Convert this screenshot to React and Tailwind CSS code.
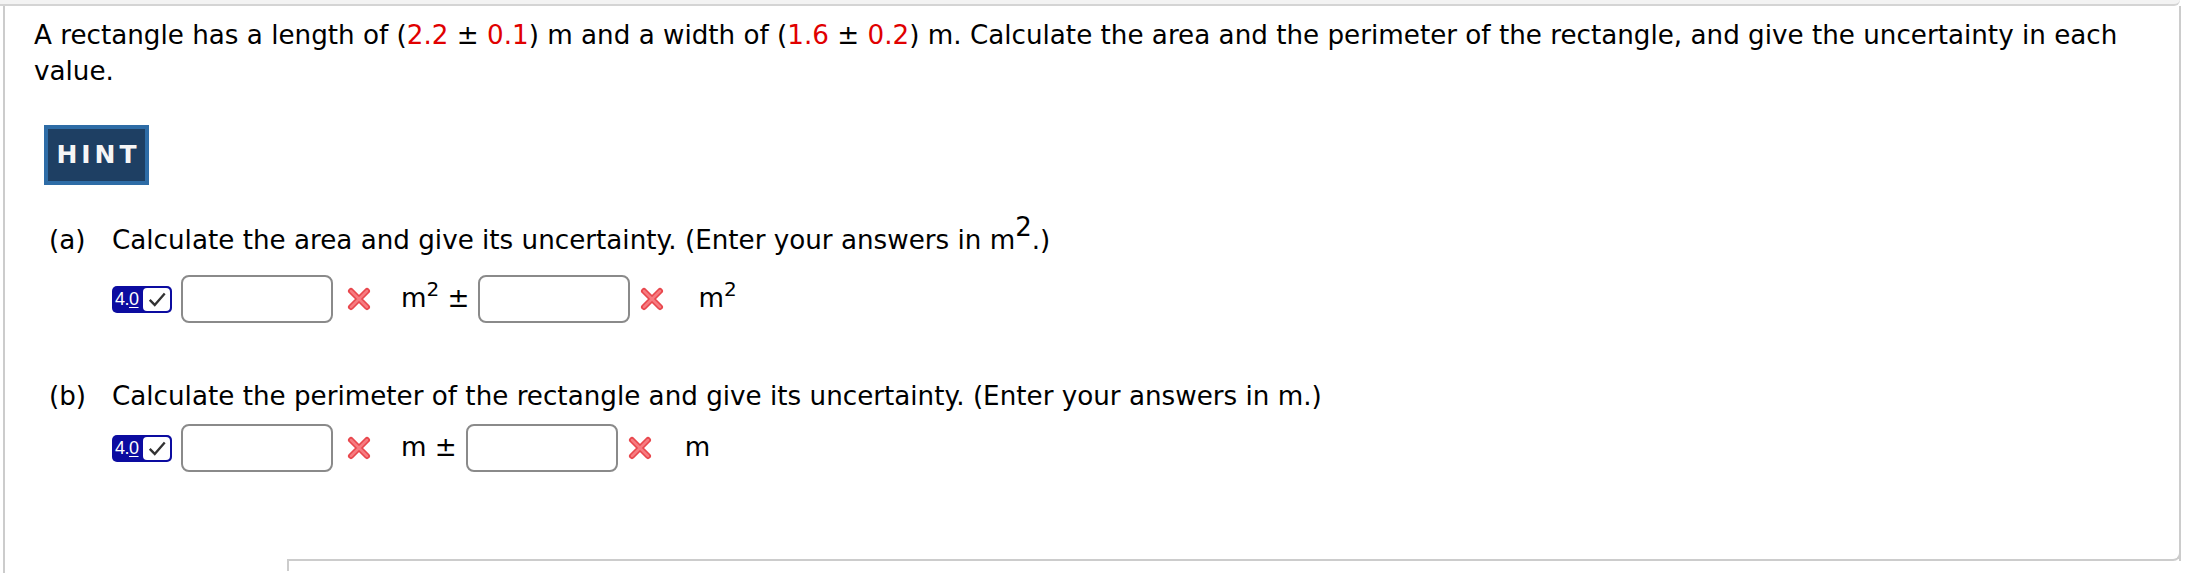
function XMark() {
  return (
    <svg width="26" height="26" viewBox="0 0 26 26" className="shrink-0">
      <path d="M5 5 L21 21 M21 5 L5 21" stroke="#e8474d" strokeWidth="6" strokeLinecap="round" />
      <path d="M5 5 L21 21 M21 5 L5 21" stroke="#f77b80" strokeWidth="2.5" strokeLinecap="round" />
    </svg>
  );
}

function Badge() {
  return (
    <div className="flex items-center h-[27px] w-[60px] rounded-[5px] bg-[#0c0ca0] pl-[3px] pr-[2px] shrink-0">
      <span className="text-white text-[18px] leading-none font-['Liberation_Sans_Narrow','Liberation_Sans',sans-serif] tracking-[-0.5px]">
        4.<span className="underline underline-offset-2">0</span>
      </span>
      <div className="ml-auto w-[27px] h-[23px] bg-white rounded-[4px] flex items-center justify-center">
        <svg width="20" height="17" viewBox="0 0 22 18">
          <path d="M3 9.5 L8.5 15 L19.5 2.5" fill="none" stroke="#333" strokeWidth="2.6" />
        </svg>
      </div>
    </div>
  );
}

function Box() {
  return <div className="w-[152px] h-[48px] shrink-0 rounded-[8px] border-2 border-[#8a8a8a] bg-white" />;
}

function Sq() {
  return (
    <span>
      m<sup className="text-[20px] top-[-0.55em]">2</sup>
    </span>
  );
}

export default function App() {
  return (
    <div className="h-[573px] w-full bg-white overflow-hidden text-[26.2px] text-black font-['DejaVu_Sans',sans-serif]">
      <div className="h-[6px] mr-[17px] bg-[#f3f3f3] border-b-2 border-[#d4d4d4] rounded-br-[6px]" />
      <div className="ml-[3px] border-l-2 border-[#cccccc] h-full">
        <div className="mr-[16px] border-r-2 border-[#cccccc] h-[555px] pl-[29px] pt-[11px]">
          <p className="leading-[36px] pr-[24px]">
            A rectangle has a length of (<span className="text-[#e00000]">2.2</span> ±{" "}
            <span className="text-[#e00000]">0.1</span>) m and a width of (<span className="text-[#e00000]">1.6</span> ±{" "}
            <span className="text-[#e00000]">0.2</span>) m. Calculate the area and the perimeter of the
            rectangle, and give the uncertainty in each value.
          </p>

          <div className="mt-[36px] ml-[10px] inline-flex items-center justify-center w-[105px] h-[60px] bg-[#1e3f63] border-4 border-[#2e6ca6] text-[#f6f6f6] font-bold text-[25px] tracking-[4px] pl-[4px]">
            HINT
          </div>

          <div className="mt-[37px] ml-[15px]">
            <div className="flex leading-[36px]">
              <span className="w-[63px] shrink-0">(a)</span>
              <span>
                Calculate the area and give its uncertainty. (Enter your answers in m
                <sup className="text-[26px] top-[-0.5em]">2</sup>.)
              </span>
            </div>
            <div className="flex items-center ml-[63px] mt-[17px]">
              <Badge />
              <div className="ml-[9px]">
                <Box />
              </div>
              <div className="ml-[13px]">
                <XMark />
              </div>
              <span className="ml-[29px]">
                <Sq /> ±
              </span>
              <div className="ml-[8px]">
                <Box />
              </div>
              <div className="ml-[9px]">
                <XMark />
              </div>
              <span className="ml-[34px]">
                <Sq />
              </span>
            </div>

            <div className="flex leading-[36px] mt-[55px]">
              <span className="w-[63px] shrink-0">(b)</span>
              <span>
                Calculate the perimeter of the rectangle and give its uncertainty. (Enter your answers in m.)
              </span>
            </div>
            <div className="flex items-center ml-[63px] mt-[10px]">
              <Badge />
              <div className="ml-[9px]">
                <Box />
              </div>
              <div className="ml-[13px]">
                <XMark />
              </div>
              <span className="ml-[29px]">m ±</span>
              <div className="ml-[9px]">
                <Box />
              </div>
              <div className="ml-[9px]">
                <XMark />
              </div>
              <span className="ml-[32px]">m</span>
            </div>
          </div>
        </div>
        <div className="ml-[282px] mr-[16px] h-[8px] -mt-[8px] border-r-2 border-b-2 border-[#cccccc] rounded-br-[8px]" />
        <div className="ml-[282px] h-[10px] border-l-2 border-[#cccccc]" />
      </div>
    </div>
  );
}
